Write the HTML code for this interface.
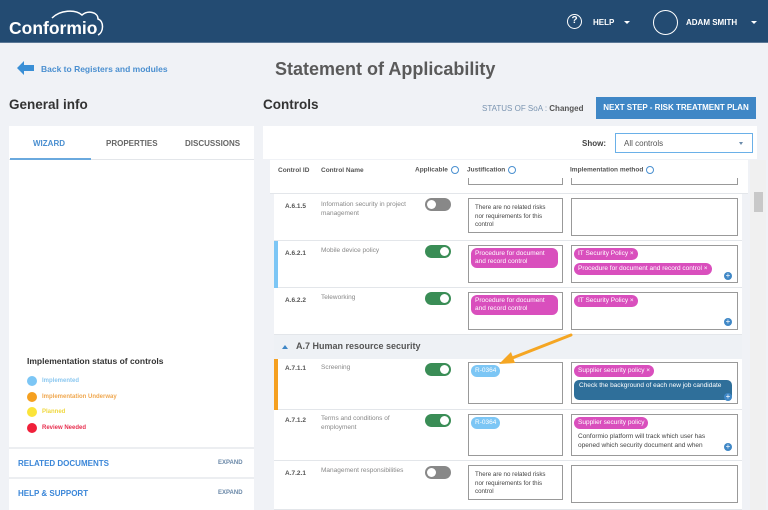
<!DOCTYPE html>
<html><head><meta charset="utf-8"><style>
*{box-sizing:border-box;margin:0;padding:0}
body{width:768px;height:510px;overflow:hidden;background:#f0f2f6;font-family:"Liberation Sans",sans-serif;position:relative;color:#555}
.a{position:absolute}
.hdr{left:0;top:0;width:768px;height:43px;background:#234b72;border-bottom:1px solid #5b7896}
.w{color:#fff;font-weight:bold}
.box{background:#fff;border:1px solid #999}
.pill{position:absolute;background:#d94fbd;color:#fff;font-size:6.5px;border-radius:6px;padding:2px 4px;line-height:8px}
.tg{position:absolute;width:26px;height:13px;border-radius:7px;left:425px}
.tg.on{background:#3a8d56}.tg.off{background:#888}
.tg:after{content:"";position:absolute;top:2px;width:9px;height:9px;border-radius:50%;background:#fff}
.tg.on:after{right:2px}.tg.off:after{left:2px}
.row{position:absolute;left:274px;width:468px;background:#fff;border-bottom:1px solid #e3e6ea}
.id{position:absolute;left:285px;font-size:6.5px;font-weight:bold;color:#555}
.nm{position:absolute;left:321px;font-size:6.5px;color:#888;line-height:9px;width:95px}
.jt{font-size:6.2px;color:#444;line-height:8.5px;padding:5px 6px 0 6px}
.plus{position:absolute;width:8px;height:8px;border-radius:50%;background:#3f87c6;color:#fff;font-size:8px;line-height:8px;text-align:center}
.dot{position:absolute;left:27px;width:10px;height:10px;border-radius:50%}
.lg{position:absolute;left:42px;font-size:6px;font-weight:bold}
.info{display:inline-block;width:8px;height:8px;border:1px solid #4a90d0;border-radius:50%;vertical-align:middle;margin-left:3px}
</style></head><body>
<div class="a hdr"></div>
<svg class="a" style="left:30px;top:6px" width="75" height="34"><path d="M22 12 C30 4 45 3 52 9 C58 4 68 6 68 13 C74 15 74 26 68 29" fill="none" stroke="#fff" stroke-width="1.5"/></svg>
<div class="a w" style="left:9px;top:18px;font-size:17.5px">Conformio</div>
<div class="a" style="left:567px;top:14px;width:15px;height:15px;border:1.5px solid #fff;border-radius:50%;color:#fff;font-size:10px;text-align:center;line-height:12px;font-weight:bold">?</div>
<div class="a w" style="left:593px;top:18px;font-size:8px">HELP</div>
<div class="a" style="left:624px;top:21px;border:3px solid transparent;border-top:3px solid #fff"></div>
<div class="a" style="left:653px;top:10px;width:25px;height:25px;border:1px solid #fff;border-radius:50%"></div>
<div class="a w" style="left:686px;top:18px;font-size:8px">ADAM SMITH</div>
<div class="a" style="left:751px;top:21px;border:3px solid transparent;border-top:3px solid #fff"></div>

<svg class="a" style="left:17px;top:61px" width="17" height="14"><path d="M0 7 L7 0 L7 4 L17 4 L17 10 L7 10 L7 14Z" fill="#3a8fd6"/></svg>
<div class="a" style="left:41px;top:64px;font-size:8.5px;color:#4a8fd0;font-weight:bold">Back to Registers and modules</div>
<div class="a" style="left:275px;top:59px;font-size:18px;font-weight:bold;color:#5a5a5a">Statement of Applicability</div>
<div class="a" style="left:9px;top:97px;font-size:13.5px;font-weight:bold;color:#333">General info</div>
<div class="a" style="left:263px;top:97px;font-size:13.5px;font-weight:bold;color:#333">Controls</div>
<div class="a" style="left:482px;top:104px;font-size:8px;color:#7a94b0">STATUS OF SoA : <b style="color:#555">Changed</b></div>
<div class="a" style="left:596px;top:97px;width:160px;height:22px;background:#3f87c6;color:#fff;font-size:8px;font-weight:bold;text-align:center;line-height:22px">NEXT STEP - RISK TREATMENT PLAN</div>

<div class="a" style="left:9px;top:126px;width:245px;height:384px;background:#fff"></div>
<div class="a" style="left:9px;top:159px;width:245px;height:1px;background:#e3e6ea"></div>
<div class="a" style="left:10px;top:158px;width:81px;height:2px;background:#6aa9de"></div>
<div class="a" style="left:33px;top:139px;font-size:8px;font-weight:bold;color:#4a8fd0">WIZARD</div>
<div class="a" style="left:106px;top:139px;font-size:8px;font-weight:bold;color:#666">PROPERTIES</div>
<div class="a" style="left:185px;top:139px;font-size:8px;font-weight:bold;color:#666">DISCUSSIONS</div>
<div class="a" style="left:27px;top:356px;font-size:8.5px;font-weight:bold;color:#333">Implementation status of controls</div>
<div class="dot" style="top:376px;background:#7cc6f5"></div><div class="lg" style="top:378px;color:#8cc8f0">Implemented</div>
<div class="dot" style="top:392px;background:#f5a020"></div><div class="lg" style="top:394px;color:#f0a850">Implementation Underway</div>
<div class="dot" style="top:407px;background:#fbe43a"></div><div class="lg" style="top:409px;color:#f0d840">Planned</div>
<div class="dot" style="top:423px;background:#f0203a"></div><div class="lg" style="top:425px;color:#e83050">Review Needed</div>
<div class="a" style="left:9px;top:447px;width:245px;height:2px;background:#eceef1"></div>
<div class="a" style="left:9px;top:477px;width:245px;height:2px;background:#eceef1"></div>
<div class="a" style="left:18px;top:459px;font-size:8px;font-weight:bold;color:#3a86d8">RELATED DOCUMENTS</div>
<div class="a" style="left:218px;top:460px;font-size:6px;font-weight:bold;color:#6a88a8">EXPAND</div>
<div class="a" style="left:18px;top:489px;font-size:8px;font-weight:bold;color:#3a86d8">HELP &amp; SUPPORT</div>
<div class="a" style="left:218px;top:490px;font-size:6px;font-weight:bold;color:#6a88a8">EXPAND</div>

<div class="a" style="left:263px;top:126px;width:494px;height:384px;background:#fff"></div>
<div class="a" style="left:263px;top:159px;width:494px;height:351px;background:#f0f2f6"></div>
<div class="a" style="left:582px;top:139px;font-size:8px;font-weight:bold;color:#444">Show:</div>
<div class="a" style="left:615px;top:133px;width:138px;height:20px;border:1px solid #6ab0e8;font-size:8px;color:#555;padding:5px 8px">All controls</div>
<div class="a" style="left:739px;top:142px;border:2.5px solid transparent;border-top:3px solid #6a8aaa"></div>
<div class="a" style="left:750px;top:160px;width:16px;height:350px;background:#f0f0f0"></div>
<div class="a" style="left:754px;top:192px;width:9px;height:20px;background:#c8c8c8"></div>

<div class="a" style="left:270px;top:160px;width:478px;height:20px;background:#fff"></div>
<div class="a" style="left:278px;top:167px;font-size:6.5px;font-weight:bold;color:#555">Control ID</div>
<div class="a" style="left:321px;top:167px;font-size:6.5px;font-weight:bold;color:#555">Control Name</div>
<div class="a" style="left:415px;top:166px;font-size:6.5px;font-weight:bold;color:#555">Applicable<span class="info"></span></div>
<div class="a" style="left:467px;top:166px;font-size:6.5px;font-weight:bold;color:#555">Justification<span class="info"></span></div>
<div class="a" style="left:570px;top:166px;font-size:6.5px;font-weight:bold;color:#555">Implementation method<span class="info"></span></div>
<div class="a" style="left:270px;top:180px;width:478px;height:14px;background:#fff;border-bottom:1px solid #e3e6ea"></div>
<div class="a box" style="left:468px;top:178px;width:95px;height:7px;border-top:none"></div>
<div class="a box" style="left:571px;top:178px;width:167px;height:7px;border-top:none"></div>

<div class="row" style="top:194px;height:47px"></div>
<div class="id" style="top:203px">A.6.1.5</div><div class="nm" style="top:200px">Information security in project management</div>
<div class="tg off" style="top:198px"></div>
<div class="a box jt" style="left:468px;top:198px;width:95px;height:35px">There are no related risks nor requirements for this control</div>
<div class="a box" style="left:571px;top:198px;width:167px;height:38px"></div>

<div class="row" style="top:241px;height:47px"></div>
<div class="a" style="left:274px;top:241px;width:4px;height:94px;background:#7cc6f5"></div>
<div class="id" style="top:250px">A.6.2.1</div><div class="nm" style="top:246px">Mobile device policy</div>
<div class="tg on" style="top:245px"></div>
<div class="a box" style="left:468px;top:245px;width:95px;height:38px"></div>
<div class="pill" style="left:471px;top:248px;width:87px">Procedure for document and record control</div>
<div class="a box" style="left:571px;top:245px;width:167px;height:38px"></div>
<div class="pill" style="left:574px;top:248px">IT Security Policy ×</div>
<div class="pill" style="left:574px;top:263px">Procedure for document and record control ×</div>
<div class="plus" style="left:724px;top:272px">+</div>

<div class="row" style="top:288px;height:47px"></div>
<div class="id" style="top:297px">A.6.2.2</div><div class="nm" style="top:293px">Teleworking</div>
<div class="tg on" style="top:292px"></div>
<div class="a box" style="left:468px;top:292px;width:95px;height:38px"></div>
<div class="pill" style="left:471px;top:295px;width:87px">Procedure for document and record control</div>
<div class="a box" style="left:571px;top:292px;width:167px;height:38px"></div>
<div class="pill" style="left:574px;top:295px">IT Security Policy ×</div>
<div class="plus" style="left:724px;top:318px">+</div>

<div class="a" style="left:274px;top:335px;width:468px;height:24px;background:#eef1f5"></div>
<div class="a" style="left:282px;top:345px;border:3px solid transparent;border-bottom:4px solid #3f87c6;border-top:none"></div>
<div class="a" style="left:296px;top:341px;font-size:9px;font-weight:bold;color:#555">A.7 Human resource security</div>

<div class="row" style="top:359px;height:51px"></div>
<div class="a" style="left:274px;top:359px;width:4px;height:101px;background:#f5a020"></div>
<div class="id" style="top:365px">A.7.1.1</div><div class="nm" style="top:363px">Screening</div>
<div class="tg on" style="top:363px"></div>
<div class="a box" style="left:468px;top:362px;width:95px;height:42px"></div>
<div class="pill" style="left:471px;top:365px;background:#7cc6f5">R-0364</div>
<div class="a box" style="left:571px;top:362px;width:167px;height:42px"></div>
<div class="pill" style="left:574px;top:365px">Supplier security policy ×</div>
<div class="pill" style="left:574px;top:380px;width:158px;height:20px;background:#2f6f9a;border-radius:5px;padding:2px 5px">Check the background of each new job candidate</div>
<div class="plus" style="left:724px;top:393px">+</div>

<div class="row" style="top:410px;height:51px"></div>
<div class="id" style="top:417px">A.7.1.2</div><div class="nm" style="top:414px">Terms and conditions of employment</div>
<div class="tg on" style="top:414px"></div>
<div class="a box" style="left:468px;top:414px;width:95px;height:42px"></div>
<div class="pill" style="left:471px;top:417px;background:#7cc6f5">R-0364</div>
<div class="a box" style="left:571px;top:414px;width:167px;height:42px"></div>
<div class="pill" style="left:574px;top:417px">Supplier security policy</div>
<div class="a" style="left:578px;top:432px;font-size:6.5px;line-height:9px;color:#444;width:145px">Conformio platform will track which user has opened which security document and when</div>
<div class="plus" style="left:724px;top:443px">+</div>

<div class="row" style="top:461px;height:49px"></div>
<div class="id" style="top:470px">A.7.2.1</div><div class="nm" style="top:466px">Management responsibilities</div>
<div class="tg off" style="top:466px"></div>
<div class="a box jt" style="left:468px;top:465px;width:95px;height:35px">There are no related risks nor requirements for this control</div>
<div class="a box" style="left:571px;top:465px;width:167px;height:38px"></div>

<svg class="a" style="left:495px;top:330px" width="85" height="40"><path d="M76 5 L12 30" stroke="#f5a623" stroke-width="3" fill="none" stroke-linecap="round"/><path d="M4 34 L16 22 L20 33Z" fill="#f5a623"/></svg>
</body></html>
